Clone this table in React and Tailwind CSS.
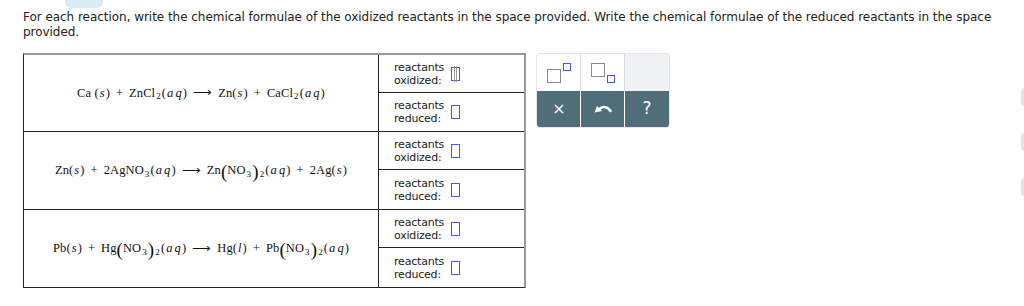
import React from "react";

const Sub = ({ children }) => (
  <span className="inline-block text-[9px] relative top-[4px] mx-[1px]">{children}</span>
);

const Big = ({ children }) => (
  <span className="inline-block text-[19px] leading-none relative top-[1px] font-light">{children}</span>
);

const Eq = ({ children }) => (
  <div className="flex items-center justify-center h-full font-['Liberation_Serif',serif] text-[12.5px] tracking-[0.1px] text-[#111] whitespace-nowrap">
    {children}
  </div>
);

const Arrow = () => <span className="mx-[6px] text-[13px]">⟶</span>;
const Plus = () => <span className="mx-[6px]">+</span>;
const I = ({ children }) => <i className="mx-[1px]">{children}</i>;

const AnswerBox = ({ active }) => (
  <div className="relative w-[9px] h-[14px] border border-[#3b5bff] bg-white">
    {active && (
      <div className="absolute left-[2px] top-[-2px] w-[3px] h-[16px] border-x border-[#999]" />
    )}
  </div>
);

const AnswerCell = ({ label, active, last }) => (
  <div
    className={`flex items-center pl-[15px] ${
      last ? "flex-1" : "h-[38px] border-b border-[#222]"
    }`}
  >
    <div className="text-[11px] leading-[13px] text-[#222] font-['DejaVu_Sans',Verdana,sans-serif] tracking-[-0.2px] w-[57px]">
      reactants
      <br />
      {label}:
    </div>
    <AnswerBox active={active} />
  </div>
);

const Row = ({ eq, first, last }) => (
  <div className={`flex ${last ? "" : "border-b border-[#222]"}`}>
    <div className={`w-[355px] border-r border-[#222] ${first ? "h-[76px]" : "h-[77px]"}`}>{eq}</div>
    <div className="flex-1 flex flex-col">
      <AnswerCell label="oxidized" active={first} />
      <AnswerCell label="reduced" last />
    </div>
  </div>
);

export default function App() {
  return (
    <div className="relative w-[1024px] h-[306px] bg-white overflow-hidden font-['DejaVu_Sans',Verdana,sans-serif]">
      <div className="absolute left-[65px] top-0 w-[38px] h-[8px] bg-[#d7edf3] rounded-b-[6px]" />

      <div className="absolute right-[-4px] top-[88px] flex flex-col gap-[27px]">
        <div className="w-[7px] h-[18px] rounded-full bg-[#e2e5e8]" />
        <div className="w-[7px] h-[18px] rounded-full bg-[#e2e5e8]" />
        <div className="w-[7px] h-[18px] rounded-full bg-[#e2e5e8]" />
      </div>

      <div className="pl-[23px] pr-[24px] pt-[10px] text-[12px] leading-[15px] text-[#222] tracking-[-0.04px]">
        For each reaction, write the chemical formulae of the oxidized reactants in the space provided. Write the chemical formulae of the reduced reactants in the space provided.
      </div>

      <div className="flex gap-[10px] pl-[23px] mt-[13px]">
        <div className="w-[503px] border-l border-b border-[#222] border-t-[2px] border-t-[#999] border-r-[2px] border-r-[#999]">
          <Row
            first
            eq={
              <Eq>
                Ca&nbsp;(<I>s</I>)<Plus />ZnCl<Sub>2</Sub>(<I>a</I><I>q</I>)<Arrow />Zn(<I>s</I>)
                <Plus />CaCl<Sub>2</Sub>(<I>a</I><I>q</I>)
              </Eq>
            }
          />
          <Row
            eq={
              <Eq>
                Zn(<I>s</I>)<Plus />2AgNO<Sub>3</Sub>(<I>a</I><I>q</I>)<Arrow />Zn<Big>(</Big>NO
                <Sub>3</Sub>
                <Big>)</Big>
                <Sub>2</Sub>(<I>a</I><I>q</I>)<Plus />2Ag(<I>s</I>)
              </Eq>
            }
          />
          <Row
            last
            eq={
              <Eq>
                Pb(<I>s</I>)<Plus />Hg<Big>(</Big>NO<Sub>3</Sub>
                <Big>)</Big>
                <Sub>2</Sub>(<I>a</I><I>q</I>)<Arrow />Hg(<I>l</I>)<Plus />Pb<Big>(</Big>NO
                <Sub>3</Sub>
                <Big>)</Big>
                <Sub>2</Sub>(<I>a</I><I>q</I>)
              </Eq>
            }
          />
        </div>

        <div className="w-[134px] h-[75px] rounded-[4px] overflow-hidden border border-[#e3e5e8] grid grid-cols-3 grid-rows-[37px_1fr] bg-[#f0f1f3]">
          <div className="bg-white border-r border-[#d7dadd] flex items-center justify-center">
            <div className="relative w-[24px] h-[20px]">
              <div className="absolute left-0 bottom-0 w-[14px] h-[14px] border border-[#8a8a8a]" />
              <div className="absolute right-0 top-0 w-[8px] h-[8px] border border-[#3b5bff]" />
            </div>
          </div>
          <div className="bg-white border-r border-[#d7dadd] flex items-center justify-center">
            <div className="relative w-[24px] h-[20px]">
              <div className="absolute left-0 top-0 w-[14px] h-[14px] border border-[#8a8a8a]" />
              <div className="absolute right-0 bottom-0 w-[8px] h-[8px] border border-[#3b5bff]" />
            </div>
          </div>
          <div className="bg-[#f0f1f3]" />
          <div className="bg-[#506e7a] border-r border-white flex items-center justify-center">
            <svg width="10" height="10" viewBox="0 0 10 10" stroke="white" strokeWidth="1.6">
              <path d="M1 1L9 9M9 1L1 9" />
            </svg>
          </div>
          <div className="bg-[#506e7a] border-r border-white flex items-center justify-center">
            <svg width="20" height="12" viewBox="0 0 20 12" fill="none">
              <path d="M6 6.5C9 3 14 3 17.5 8" stroke="white" strokeWidth="2.6" strokeLinecap="round" />
              <path d="M1.5 9.5L4 3L9 8Z" fill="white" />
            </svg>
          </div>
          <div className="bg-[#506e7a] flex items-center justify-center text-white text-[17px] font-['DejaVu_Sans',sans-serif]">
            ?
          </div>
        </div>
      </div>
    </div>
  );
}
